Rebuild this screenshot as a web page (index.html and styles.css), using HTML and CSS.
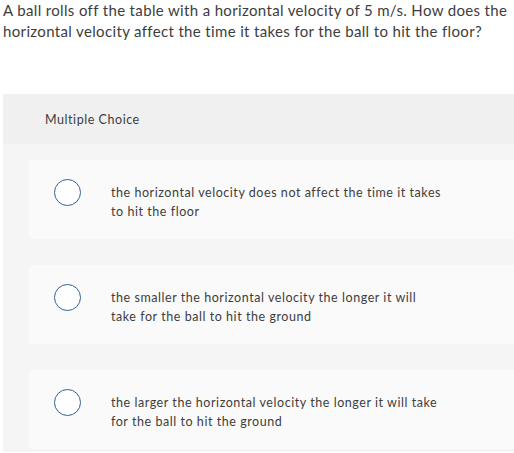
FILE: index.html
```html
<!DOCTYPE html>
<html>
<head>
<meta charset="utf-8">
<link rel="stylesheet" href="styles.css">
</head>
<body>
<p class="question">A ball rolls off the table with a horizontal velocity of 5 m/s. How does the horizontal velocity affect the time it takes for the ball to hit the floor?</p>
<div class="panel">
  <div class="panel-head">Multiple Choice</div>
  <div class="panel-body">
    <div class="choice">
      <span class="radio"></span>
      <span class="label">the horizontal velocity does not affect the time it takes<br>to hit the floor</span>
    </div>
    <div class="choice">
      <span class="radio"></span>
      <span class="label">the smaller the horizontal velocity the longer it will<br>take for the ball to hit the ground</span>
    </div>
    <div class="choice">
      <span class="radio"></span>
      <span class="label">the larger the horizontal velocity the longer it will take<br>for the ball to hit the ground</span>
    </div>
  </div>
</div>
</body>
</html>
```
FILE: styles.css
```css
html, body { margin: 0; padding: 0; background: #fff; }
body { font-family: Lato, "Open Sans", sans-serif; color: #3d3d3d; }
.question {
  margin: 0;
  padding: 0 3px;
  font-size: 15px;
  line-height: 21px;
  letter-spacing: 0.35px;
  color: #3d3d3d;
}
.panel {
  margin: 52px 0 0 3px;
  background: #f5f5f5;
  padding-bottom: 3px;
}
.panel-head {
  background: #f0f0f0;
  height: 50px;
  padding-left: 42px;
  display: flex;
  align-items: center;
  font-size: 12.5px;
  letter-spacing: 0.55px;
}
.panel-body {
  padding: 16px 0 0 26px;
  display: flex;
  flex-direction: column;
  gap: 26px;
}
.choice {
  background: #fafafa;
  border-radius: 3px 0 0 3px;
  height: 79px;
  box-sizing: border-box;
  display: flex;
  align-items: flex-start;
  padding: 19px 0 0 25px;
}
.radio {
  width: 25px;
  height: 25px;
  border: 1.5px solid #2e6199;
  border-radius: 50%;
  background: #fff;
  flex: none;
}
.label {
  margin: 4px 0 0 30px;
  max-width: 360px;
  font-size: 12.5px;
  line-height: 19px;
  letter-spacing: 0.55px;
  color: #3d3d3d;
}
```
